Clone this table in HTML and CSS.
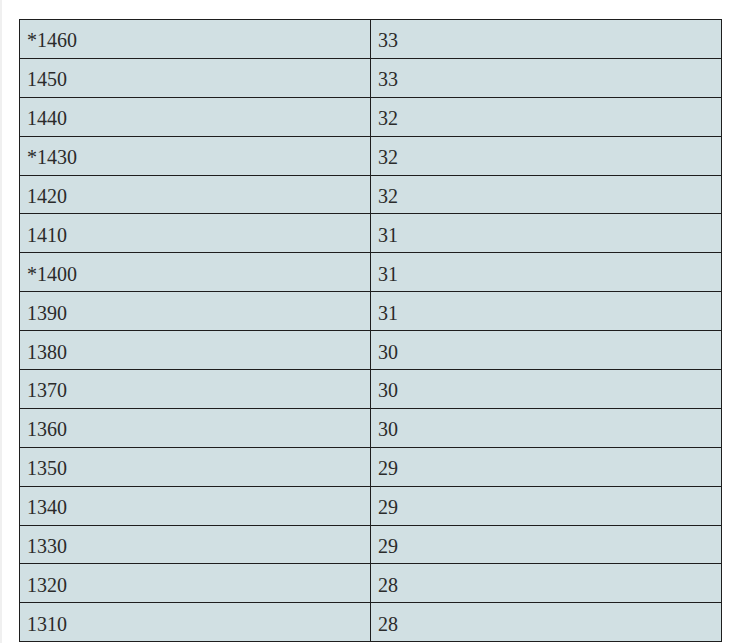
FILE: index.html
```html
<!DOCTYPE html>
<html>
<head>
<meta charset="utf-8">
<link rel="stylesheet" href="styles.css">
</head>
<body>
<div class="page">
<table class="data">
<tr><td>*1460</td><td>33</td></tr>
<tr><td>1450</td><td>33</td></tr>
<tr><td>1440</td><td>32</td></tr>
<tr><td>*1430</td><td>32</td></tr>
<tr><td>1420</td><td>32</td></tr>
<tr><td>1410</td><td>31</td></tr>
<tr><td>*1400</td><td>31</td></tr>
<tr><td>1390</td><td>31</td></tr>
<tr><td>1380</td><td>30</td></tr>
<tr><td>1370</td><td>30</td></tr>
<tr><td>1360</td><td>30</td></tr>
<tr><td>1350</td><td>29</td></tr>
<tr><td>1340</td><td>29</td></tr>
<tr><td>1330</td><td>29</td></tr>
<tr><td>1320</td><td>28</td></tr>
<tr><td>1310</td><td>28</td></tr>
</table>
</div>
</body>
</html>
```
FILE: styles.css
```css
html, body {
  margin: 0;
  padding: 0;
  background: #ffffff;
}
.page {
  border-left: 2px solid #f0f0f0;
  padding: 19px 0 0 17px;
  height: 643px;
  box-sizing: border-box;
  overflow: hidden;
}
.data {
  border-collapse: collapse;
  width: 703px;
  table-layout: fixed;
  font-family: "Liberation Serif", "DejaVu Serif", serif;
  font-variant-numeric: oldstyle-nums;
  font-size: 20px;
  color: #2b2b2b;
  border-top: 1px solid #777;
}
.data td {
  background: #d1e0e3;
  border: 1px solid #1e1e1e;
  height: 38.9px;
  box-sizing: border-box;
  padding: 4px 7px 0 7px;
  vertical-align: middle;
}
.data td:first-child {
  width: 351px;
}
```
